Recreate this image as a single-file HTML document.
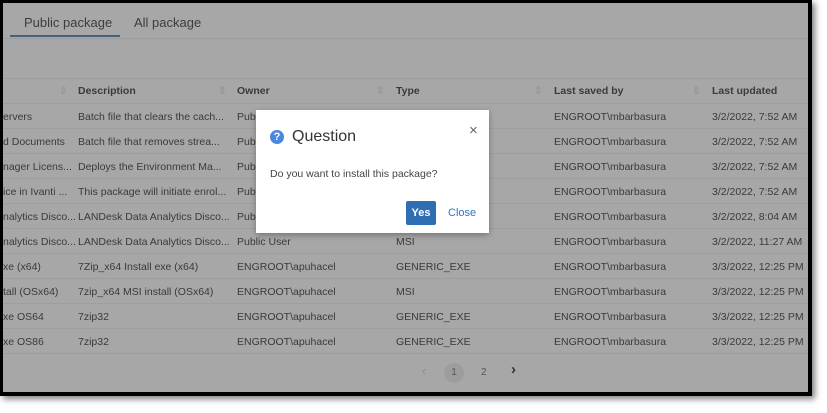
<!DOCTYPE html>
<html><head><style>
body{margin:0;width:827px;height:413px;background:#fff;overflow:hidden;font-family:"Liberation Sans",sans-serif;position:relative}
.frame{position:absolute;left:0;top:0;width:812px;height:396px;background:#000;box-shadow:3px 3px 6px rgba(0,0,0,.5)}
.in{position:absolute;left:3px;top:3px;width:805px;height:389px;background:#a7a7a7;overflow:hidden;font-size:10.5px;color:#3a3a3a}
.tab{position:absolute;top:12px;font-size:13px;color:#3d3d3d}
.line{position:absolute;left:0;right:0;height:1px;background:#9c9c9c}
.row{position:absolute;left:0;width:805px;height:25px;border-bottom:1px solid #9e9e9e}
.row span{position:absolute;top:8px;white-space:nowrap}
.hd span{font-weight:bold;color:#3a3a3a;top:6px}
.dlg{position:absolute;left:256px;top:110px;width:233px;height:123px;background:#fff;box-shadow:0 2px 6px rgba(0,0,0,.3);font-family:"Liberation Sans",sans-serif}
</style></head><body>
<div class="frame"></div>
<div class="in">
<div class="tab" style="left:21px">Public package</div>
<div class="tab" style="left:131px">All package</div>
<div style="position:absolute;left:7px;top:32px;width:110px;height:2px;background:#44607a"></div>
<div class="line" style="top:35px"></div>
<div class="row hd" style="top:75px;border-top:1px solid #9e9e9e;height:24px">
<span style="left:75px">Description</span><span style="left:234px">Owner</span><span style="left:393px">Type</span><span style="left:551px">Last saved by</span><span style="left:709px">Last updated</span>
<span style="left:56px;color:#999">⇕</span><span style="left:215px;color:#999">⇕</span><span style="left:373px;color:#999">⇕</span><span style="left:531px;color:#999">⇕</span><span style="left:689px;color:#999">⇕</span>
</div>
<div class="row" style="top:100px"><span style="left:0">ervers</span><span style="left:75px">Batch file that clears the cach...</span><span style="left:234px">Public User</span><span style="left:393px">MSI</span><span style="left:551px">ENGROOT\mbarbasura</span><span style="left:709px">3/2/2022, 7:52 AM</span></div>
<div class="row" style="top:125px"><span style="left:0">d Documents</span><span style="left:75px">Batch file that removes strea...</span><span style="left:234px">Public User</span><span style="left:393px">MSI</span><span style="left:551px">ENGROOT\mbarbasura</span><span style="left:709px">3/2/2022, 7:52 AM</span></div>
<div class="row" style="top:150px"><span style="left:0">nager Licens...</span><span style="left:75px">Deploys the Environment Ma...</span><span style="left:234px">Public User</span><span style="left:393px">MSI</span><span style="left:551px">ENGROOT\mbarbasura</span><span style="left:709px">3/2/2022, 7:52 AM</span></div>
<div class="row" style="top:175px"><span style="left:0">ice in Ivanti ...</span><span style="left:75px">This package will initiate enrol...</span><span style="left:234px">Public User</span><span style="left:393px">MSI</span><span style="left:551px">ENGROOT\mbarbasura</span><span style="left:709px">3/2/2022, 7:52 AM</span></div>
<div class="row" style="top:200px"><span style="left:0">nalytics Disco...</span><span style="left:75px">LANDesk Data Analytics Disco...</span><span style="left:234px">Public User</span><span style="left:393px">MSI</span><span style="left:551px">ENGROOT\mbarbasura</span><span style="left:709px">3/2/2022, 8:04 AM</span></div>
<div class="row" style="top:225px"><span style="left:0">nalytics Disco...</span><span style="left:75px">LANDesk Data Analytics Disco...</span><span style="left:234px">Public User</span><span style="left:393px">MSI</span><span style="left:551px">ENGROOT\mbarbasura</span><span style="left:709px">3/2/2022, 11:27 AM</span></div>
<div class="row" style="top:250px"><span style="left:0">xe (x64)</span><span style="left:75px">7Zip_x64 Install exe (x64)</span><span style="left:234px">ENGROOT\apuhacel</span><span style="left:393px">GENERIC_EXE</span><span style="left:551px">ENGROOT\mbarbasura</span><span style="left:709px">3/3/2022, 12:25 PM</span></div>
<div class="row" style="top:275px"><span style="left:0">tall (OSx64)</span><span style="left:75px">7zip_x64 MSI install (OSx64)</span><span style="left:234px">ENGROOT\apuhacel</span><span style="left:393px">MSI</span><span style="left:551px">ENGROOT\mbarbasura</span><span style="left:709px">3/3/2022, 12:25 PM</span></div>
<div class="row" style="top:300px"><span style="left:0">xe OS64</span><span style="left:75px">7zip32</span><span style="left:234px">ENGROOT\apuhacel</span><span style="left:393px">GENERIC_EXE</span><span style="left:551px">ENGROOT\mbarbasura</span><span style="left:709px">3/3/2022, 12:25 PM</span></div>
<div class="row" style="top:325px"><span style="left:0">xe OS86</span><span style="left:75px">7zip32</span><span style="left:234px">ENGROOT\apuhacel</span><span style="left:393px">GENERIC_EXE</span><span style="left:551px">ENGROOT\mbarbasura</span><span style="left:709px">3/3/2022, 12:25 PM</span></div>
<div style="position:absolute;left:419px;top:360px;color:#8d8d8d;font-size:13px">‹</div>
<div style="position:absolute;left:441px;top:360px;width:20px;height:20px;border-radius:10px;background:#9d9d9d;text-align:center;line-height:20px;font-size:10px;color:#555">1</div>
<div style="position:absolute;left:478px;top:364px;font-size:10px;color:#555">2</div>
<div style="position:absolute;left:508px;top:358px;font-size:15px;color:#333;font-weight:bold">›</div>
</div>
<div class="dlg">
<div style="position:absolute;left:14px;top:20px;width:14px;height:14px;border-radius:7px;background:#4a87dd;color:#fff;font-size:11px;font-weight:bold;text-align:center;line-height:14px">?</div>
<div style="position:absolute;left:36px;top:18px;font-size:16px;color:#333">Question</div>
<div style="position:absolute;left:213px;top:12px;font-size:15px;color:#666">×</div>
<div style="position:absolute;left:14px;top:58px;font-size:10.5px;color:#444">Do you want to install this package?</div>
<div style="position:absolute;left:150px;top:91px;width:30px;height:24px;background:#2e6fb3;border-radius:2px;color:#fff;font-size:11px;font-weight:bold;text-align:center;line-height:24px">Yes</div>
<div style="position:absolute;left:192px;top:97px;font-size:11px;color:#2e74c2">Close</div>
</div>
</body></html>
